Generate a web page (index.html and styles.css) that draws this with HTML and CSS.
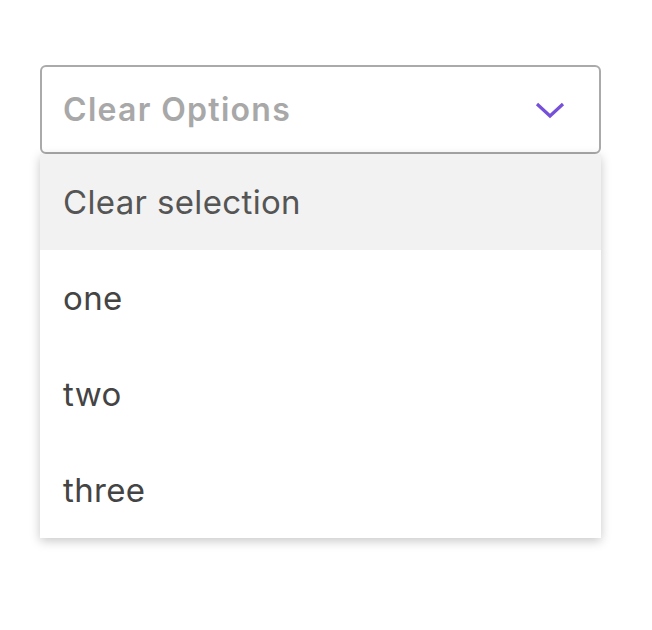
FILE: index.html
```html
<!DOCTYPE html>
<html>
    <head>
        <meta charset="utf-8">
        <title>Clear Options</title>
        <link rel="stylesheet" href="styles.css">
    </head>
    <body>
        <div class="select">
            <div class="select-control">
                <span class="select-placeholder">Clear Options</span>
                <svg class="select-arrow" width="30" height="18" viewBox="0 0 30 18">
                    <path d="M2 3 L15 15 L28 3" fill="none" stroke="#7650d8" stroke-width="3.2"/>
                </svg>
            </div>
            <ul class="select-menu">
                <li class="select-option is-active">Clear selection</li>
                <li class="select-option">one</li>
                <li class="select-option">two</li>
                <li class="select-option">three</li>
            </ul>
        </div>
    </body>
</html>
```

FILE: styles.css
```css
html, body {
    min-height: 100%;
}

body {
    margin: 0;
    padding-bottom: 60px;
    background: #fff;
    font-family: Inter, "Liberation Sans", sans-serif;
}

.select {
    width: 561px;
    margin: 65px 0 0 40px;
}

.select-control {
    height: 85px;
    border: 2px solid #aaa;
    border-radius: 6px;
    display: flex;
    align-items: center;
    justify-content: space-between;
    padding: 0 34px 0 21px;
}

.select-placeholder {
    font-size: 32px;
    font-weight: 600;
    letter-spacing: 1.3px;
    color: #a8a8a8;
}

.select-menu {
    list-style: none;
    margin: 0;
    padding: 0;
    background: #fff;
    box-shadow: 0 3px 10px rgba(0, 0, 0, 0.22);
}

.select-option {
    height: 96px;
    display: flex;
    align-items: center;
    padding-left: 23px;
    font-size: 33px;
    letter-spacing: 0.35px;
    color: #444;
}

.select-option.is-active {
    background: #f2f2f2;
    color: #555;
}
```
